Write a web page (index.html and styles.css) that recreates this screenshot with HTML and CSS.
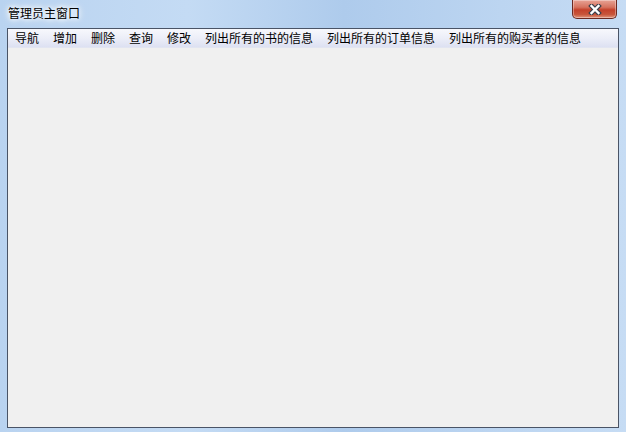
FILE: index.html
```html
<!DOCTYPE html>
<html lang="zh-CN">
<head>
    <meta charset="UTF-8" />
    <title>管理员主窗口</title>
    <link rel="stylesheet" href="styles.css">
</head>
<body>
    <div class="window">
        <div class="title-bar">
            <span class="title">管理员主窗口</span>
            <div class="close-btn">
                <svg width="14" height="11" viewBox="0 0 14 11">
                    <path d="M3.5 2 L10.5 9 M10.5 2 L3.5 9" stroke="#3a3f4a" stroke-width="4.6" stroke-linecap="square"/>
                    <path d="M3.5 2 L10.5 9 M10.5 2 L3.5 9" stroke="#ffffff" stroke-width="2.4" stroke-linecap="square"/>
                </svg>
            </div>
        </div>
        <div class="client">
            <div class="menu-bar">
                <span class="menu-item">导航</span>
                <span class="menu-item">增加</span>
                <span class="menu-item">删除</span>
                <span class="menu-item">查询</span>
                <span class="menu-item">修改</span>
                <span class="menu-item">列出所有的书的信息</span>
                <span class="menu-item">列出所有的订单信息</span>
                <span class="menu-item">列出所有的购买者的信息</span>
            </div>
            <div class="content"></div>
        </div>
    </div>
</body>
</html>
```
FILE: styles.css
```css
body {
    margin: 0;
    font-family: "Noto Sans CJK SC", "Noto Sans", sans-serif;
    background: #ffffff;
}
.window {
    width: 626px;
    height: 432px;
    box-sizing: border-box;
    display: flex;
    flex-direction: column;
    position: relative;
    background: linear-gradient(90deg, #b9d3f0 0%, #c4dbf4 30%, #aecbec 55%, #bcd5f1 80%, #c6dcf4 100%);
    padding: 0 7px 4px 7px;
}
.title-bar {
    height: 28px;
    flex: none;
    display: flex;
    align-items: flex-start;
}
.title {
    font-size: 12px;
    line-height: 14px;
    margin-top: 6px;
    margin-left: 1px;
    color: #000000;
    text-shadow: 0 0 4px #ffffff, 0 0 6px #ffffff, 0 0 8px #ffffff;
}
.close-btn {
    position: absolute;
    top: 0;
    left: 572px;
    width: 45px;
    height: 19px;
    box-sizing: border-box;
    border: 1px solid #6b2a22;
    border-top: none;
    border-radius: 0 0 5px 5px;
    background: linear-gradient(180deg, #e8a395 0%, #d6735f 40%, #c4412a 55%, #c8553a 80%, #e0957c 100%);
    box-shadow: inset 0 0 0 1px rgba(255, 255, 255, 0.35);
    display: flex;
    align-items: center;
    justify-content: center;
}
.client {
    flex: 1;
    display: flex;
    flex-direction: column;
    border: 1px solid #4a5466;
    background: #f0f0f0;
}
.menu-bar {
    height: 18px;
    display: flex;
    align-items: center;
    padding-left: 0;
    background: linear-gradient(180deg, #f7f8fc 0%, #eceef8 50%, #dde1f2 100%);
    border-bottom: 1px solid #e2e5f1;
}
.menu-item {
    font-size: 12px;
    line-height: 16px;
    padding: 0 7px;
    color: #000000;
}
.content {
    flex: 1;
}
```
